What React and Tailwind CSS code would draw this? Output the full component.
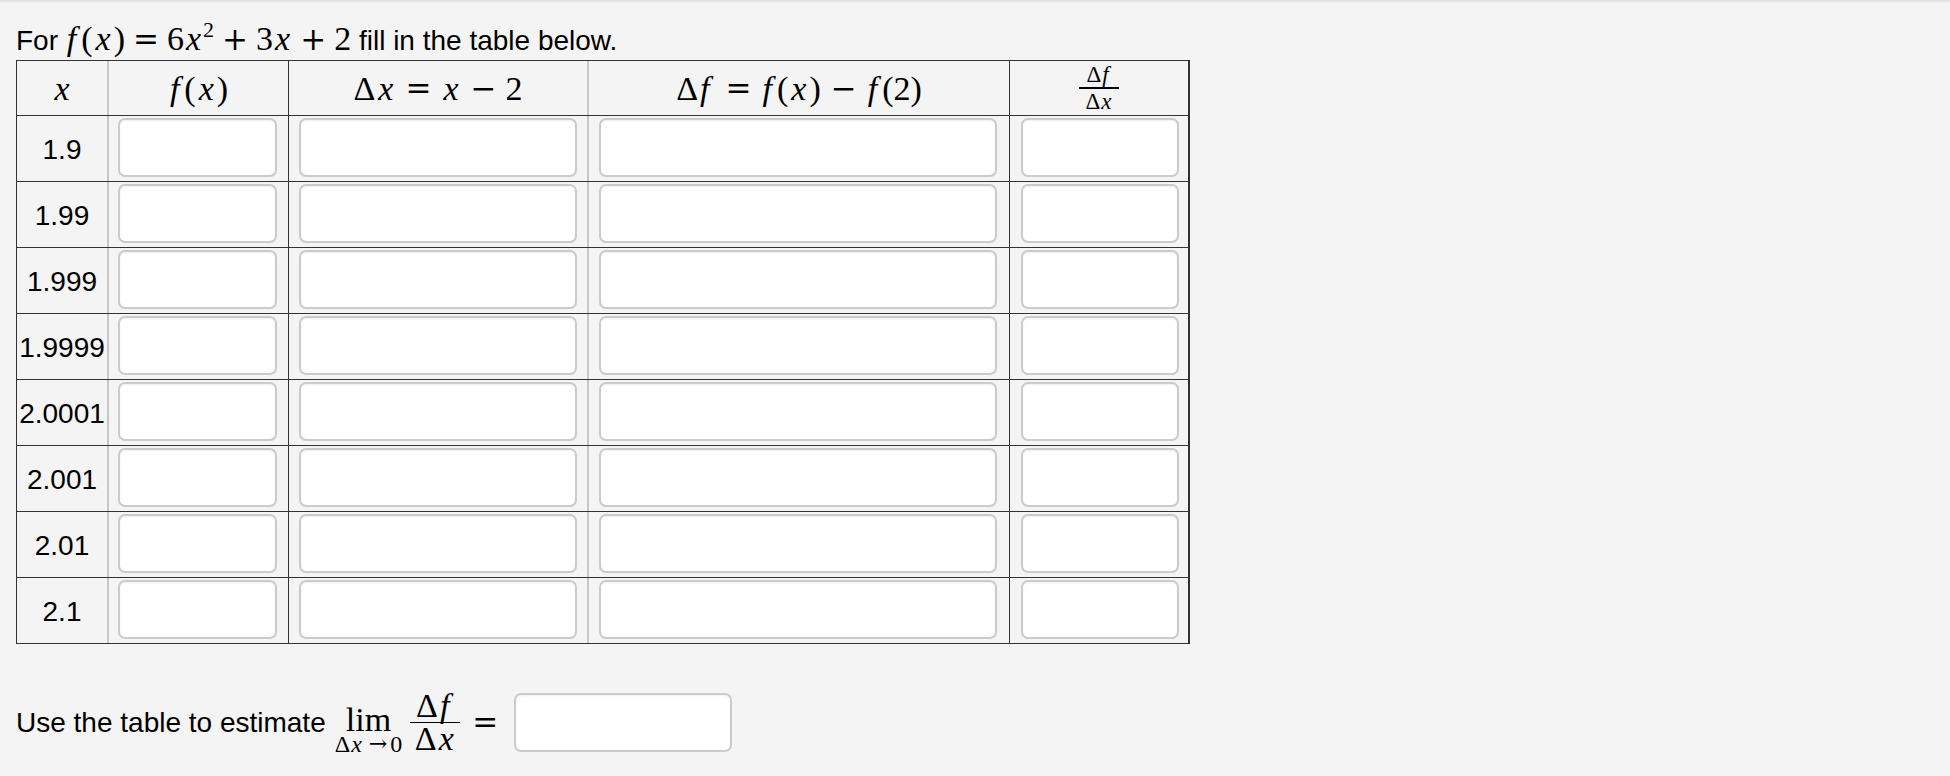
import React from "react";

const rows = ["1.9", "1.99", "1.999", "1.9999", "2.0001", "2.001", "2.01", "2.1"];

const serif = "font-[family-name:'Liberation_Serif','Times_New_Roman',serif]";
const opFont = "font-[family-name:'DejaVu_Serif',serif]";

// italic math variable
const V = ({ children, className = "" }) => (
  <span className={`italic ${className}`}>{children}</span>
);

// relation / binary operator, wider glyphs like TeX
const Op = ({ children, className = "mx-[9px]" }) => (
  <span className={`${opFont} text-[31px] ${className}`}>{children}</span>
);

const Fx = ({ arg = "x" }) =>
  arg === "x" ? (
    <>
      <V className="pl-[1px] pr-[5px]">f</V>(<V className="px-[3px]">x</V>)
    </>
  ) : (
    <>
      <V className="pl-[1px] pr-[5px]">f</V>({arg})
    </>
  );

const Box = () => (
  <input
    type="text"
    readOnly
    className="h-[59px] w-full min-w-0 rounded-[7px] border-2 border-[#cbcbcb] bg-white shadow-[inset_0_1px_2px_rgba(0,0,0,0.07)] outline-none"
  />
);

export default function App() {
  return (
    <div className="min-h-screen bg-[#f4f4f4] font-[family-name:'Liberation_Sans',Arial,sans-serif] text-[28px] text-black">
      <div className="h-[3px] bg-gradient-to-b from-[#d9d9d9] to-[#f4f4f4]" />
      <div className="pl-[16px]">
        {/* prompt */}
        <div className="mt-[22px] mb-[3px] h-[32px] whitespace-nowrap leading-[32px]">
          For{" "}
          <span className={`${serif} text-[34px] leading-[28px]`}>
            <Fx />
            <Op className="mx-[8px] leading-[28px]">=</Op>6<V className="px-[2px]">x</V>
            <span className="relative -top-[13px] text-[22px] leading-none">2</span>
            <Op className="mx-[8px] leading-[28px]">+</Op>3<V className="px-[2px]">x</V>
            <Op className="mx-[8px] leading-[28px]">+</Op>2
          </span>{" "}
          fill in the table below.
        </div>

        {/* table */}
        <div className="w-[1174px] border-t border-l border-r-2 border-[#333]">
          <div className={`flex h-[55px] border-b border-[#333] ${serif} text-[34px]`}>
            <div className="flex w-[92px] shrink-0 items-center justify-center border-r-2 border-[#c6c6c6]">
              <V>x</V>
            </div>
            <div className="flex w-[180px] shrink-0 items-center justify-center border-r border-[#333]">
              <Fx />
            </div>
            <div className="flex w-[300px] shrink-0 items-center justify-center border-r-2 border-[#c6c6c6]">
              Δ<V className="px-[3px]">x</V>
              <Op>=</Op>
              <V className="px-[3px]">x</V>
              <Op>−</Op>2
            </div>
            <div className="flex w-[421px] shrink-0 items-center justify-center border-r border-[#333]">
              Δ<V className="pl-[2px] pr-[6px]">f</V>
              <Op className="mx-[10px]">=</Op>
              <Fx />
              <Op className="mx-[10px]">−</Op>
              <Fx arg="2" />
            </div>
            <div className="flex w-[178px] shrink-0 items-center justify-center">
              <div className="flex flex-col items-center text-[23px] leading-[21px]">
                <span>
                  Δ<V className="pl-[1px] pr-[3px]">f</V>
                </span>
                <span className="my-[2px] h-[1.5px] w-[40px] bg-black" />
                <span>
                  Δ<V className="pl-[1px] pr-[1px]">x</V>
                </span>
              </div>
            </div>
          </div>

          {rows.map((r) => (
            <div key={r} className="flex h-[66px] border-b border-[#333]">
              <div className="flex w-[92px] shrink-0 items-center justify-center border-r-2 border-[#c6c6c6] pt-[2px] leading-[32px]">
                {r}
              </div>
              <div className="flex w-[180px] shrink-0 items-start border-r border-[#333] pt-[2px] pl-[9px] pr-[11px]">
                <Box />
              </div>
              <div className="flex w-[300px] shrink-0 items-start border-r-2 border-[#c6c6c6] pt-[2px] pl-[10px] pr-[10px]">
                <Box />
              </div>
              <div className="flex w-[421px] shrink-0 items-start border-r border-[#333] pt-[2px] pl-[10px] pr-[12px]">
                <Box />
              </div>
              <div className="flex w-[178px] shrink-0 items-start pt-[2px] pl-[11px] pr-[9px]">
                <Box />
              </div>
            </div>
          ))}
        </div>

        {/* limit estimate */}
        <div className="mt-[49px] flex h-[59px] items-center whitespace-nowrap">
          <span className="leading-[32px]">Use the table to estimate</span>
          <div className={`ml-[9px] flex flex-col items-center self-start pt-[14px] ${serif}`}>
            <span className="text-[34px] leading-[26px]">lim</span>
            <span className="mt-[1px] flex items-center text-[24px] leading-[20px]">
              Δ<V className="pl-[1px] pr-[4px]">x</V>
              <span className={`${opFont} mx-[3px] text-[22px]`}>→</span>0
            </span>
          </div>
          <div className={`ml-[8px] flex flex-col items-center ${serif} text-[34px] leading-[30px]`}>
            <span>
              Δ<V className="pl-[2px] pr-[5px]">f</V>
            </span>
            <span className="my-[1px] h-[1.5px] w-[50px] bg-black" />
            <span>
              Δ<V className="px-[2px]">x</V>
            </span>
          </div>
          <Op className="ml-[12px]">=</Op>
          <div className="ml-[16px] w-[218px]">
            <Box />
          </div>
        </div>
      </div>
    </div>
  );
}
